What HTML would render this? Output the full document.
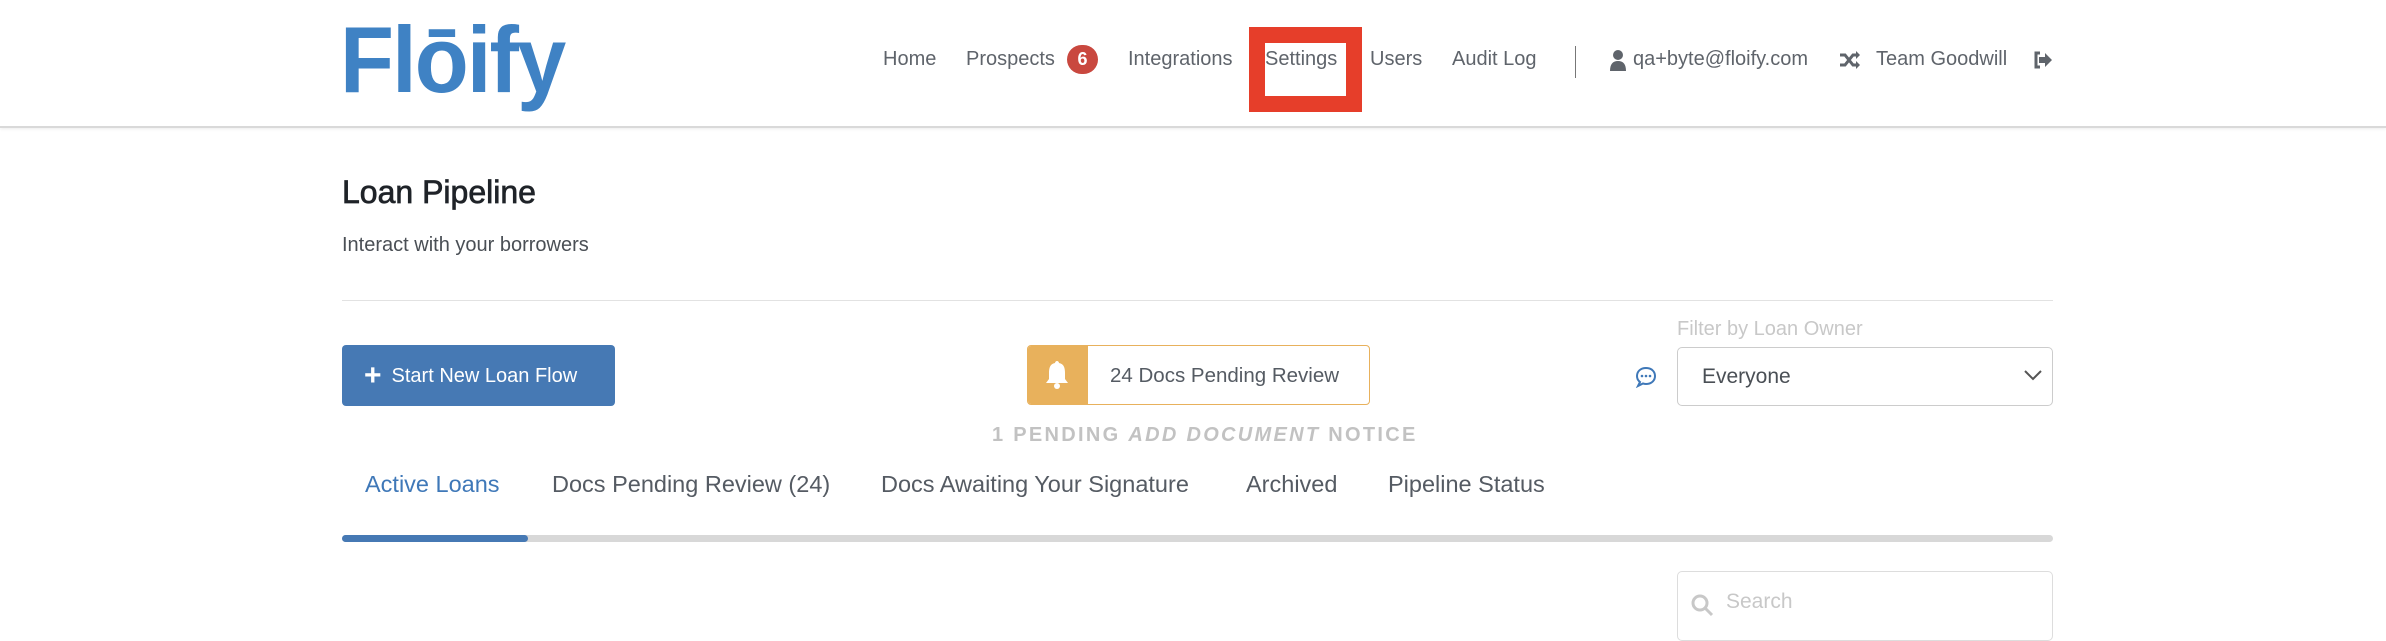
<!DOCTYPE html>
<html><head><meta charset="utf-8"><style>
*{margin:0;padding:0;box-sizing:border-box}
body{width:2386px;height:612px;overflow:hidden;background:#fff;font-family:"Liberation Sans",Arial,sans-serif;color:#555b63;position:relative}
.a{position:absolute;white-space:nowrap}
.hdr{position:absolute;left:0;top:0;width:2386px;height:128px;border-bottom:2px solid #d9d9d9;box-shadow:0 1px 3px rgba(0,0,0,.08)}
.nav{font-size:20px;color:#5f646b;top:48px}
</style></head><body>
<div class="hdr"></div>
<div class="a" style="left:340px;top:0px;font-size:94px;font-weight:bold;color:#3f82c4;letter-spacing:-2px;line-height:120px;transform:scaleX(0.94);transform-origin:left top">Flōify</div>
<div class="a nav" style="left:883px">Home</div>
<div class="a nav" style="left:966px">Prospects</div>
<div class="a" style="left:1067px;top:45px;width:31px;height:29px;border-radius:15px;background:#c9483f;color:#fff;font-size:18px;font-weight:bold;text-align:center;line-height:29px">6</div>
<div class="a nav" style="left:1128px">Integrations</div>
<div class="a nav" style="left:1265px">Settings</div>
<div class="a" style="left:1249px;top:27px;width:113px;height:85px;border:16px solid #e63e2a"></div>
<div class="a nav" style="left:1370px">Users</div>
<div class="a nav" style="left:1452px">Audit Log</div>
<div class="a" style="left:1575px;top:46px;width:1px;height:32px;background:#777"></div>
<svg class="a" style="left:1610px;top:49px" width="16" height="24" viewBox="0 0 16 24"><circle cx="8" cy="6" r="5" fill="#5f646b"/><path d="M0 22 Q0 12 8 12 Q16 12 16 22Z" fill="#5f646b"/></svg>
<div class="a nav" style="left:1633px">qa+byte@floify.com</div>
<svg class="a" style="left:1839px;top:50px" width="22" height="20" viewBox="0 0 22 20"><path d="M1 5h5l8 10h5M1 15h5l8-10h5" stroke="#5f646b" stroke-width="3" fill="none"/><path d="M17 1l4 4-4 4zM17 11l4 4-4 4z" fill="#5f646b"/></svg>
<div class="a nav" style="left:1876px">Team Goodwill</div>
<svg class="a" style="left:2033px;top:51px" width="20" height="18" viewBox="0 0 20 18"><path d="M7 2H3v14h4" stroke="#5f646b" stroke-width="3" fill="none"/><path d="M6 6h6V2l7 7-7 7v-4H6z" fill="#5f646b"/></svg>

<div class="a" style="left:342px;top:174px;font-size:32px;color:#1f2328;-webkit-text-stroke:0.7px #1f2328">Loan Pipeline</div>
<div class="a" style="left:342px;top:234px;font-size:20px;color:#4a4f55">Interact with your borrowers</div>
<div class="a" style="left:342px;top:300px;width:1711px;height:1px;background:#e2e2e2"></div>

<div class="a" style="left:342px;top:345px;width:273px;height:61px;background:#4679b4;border-radius:4px;color:#fff;font-size:20px;line-height:61px;padding-left:22px"><span style="font-size:30px;font-weight:bold;vertical-align:-3px;margin-right:10px">+</span>Start New Loan Flow</div>

<div class="a" style="left:1027px;top:345px;width:343px;height:60px;border:1.5px solid #e8b15c;border-radius:4px;overflow:hidden">
<div style="position:absolute;left:0;top:0;width:60px;height:60px;background:#e8b15c"></div>
<svg style="position:absolute;left:16px;top:14px" width="26" height="30" viewBox="0 0 26 30"><path d="M13 1c-1 0-2 1-2 2C6 4 5 8 5 13v6L2 23h22l-3-4v-6c0-5-1-9-6-10 0-1-1-2-2-2z" fill="#fff"/><circle cx="13" cy="26" r="3" fill="#fff"/></svg>
<div style="position:absolute;left:82px;top:0;line-height:60px;font-size:20.5px;color:#555b63">24 Docs Pending Review</div></div>

<div class="a" style="left:992px;top:424px;font-size:20px;font-weight:bold;color:#c2c2c2;letter-spacing:2.3px">1 PENDING <i>ADD DOCUMENT</i> NOTICE</div>

<svg class="a" style="left:1635px;top:366px" width="22" height="22" viewBox="0 0 22 22"><path d="M11 2C5.5 2 2 5.5 2 10c0 2.5 1 4.5 3 6l-2 4 5-2.5c1 .3 2 .5 3 .5 5.5 0 9-3.5 9-8S16.5 2 11 2z" fill="none" stroke="#3f78b8" stroke-width="2"/><circle cx="7" cy="10" r="1.3" fill="#3f78b8"/><circle cx="11" cy="10" r="1.3" fill="#3f78b8"/><circle cx="15" cy="10" r="1.3" fill="#3f78b8"/></svg>

<div class="a" style="left:1677px;top:318px;font-size:20px;color:#c8c8c8">Filter by Loan Owner</div>
<div class="a" style="left:1677px;top:347px;width:376px;height:59px;border:1px solid #ccc;border-radius:5px">
<div style="position:absolute;left:24px;top:0;line-height:57px;font-size:21px;color:#4a4f55">Everyone</div>
<svg style="position:absolute;right:10px;top:22px" width="18" height="12" viewBox="0 0 18 12"><path d="M1 1l8 8 8-8" stroke="#555" stroke-width="2" fill="none"/></svg></div>

<div class="a" style="left:365px;top:471px;font-size:23.5px;color:#3f78b8">Active Loans</div>
<div class="a" style="left:552px;top:471px;font-size:23.5px">Docs Pending Review (24)</div>
<div class="a" style="left:881px;top:471px;font-size:23.5px">Docs Awaiting Your Signature</div>
<div class="a" style="left:1246px;top:471px;font-size:23.5px">Archived</div>
<div class="a" style="left:1388px;top:471px;font-size:23.5px">Pipeline Status</div>
<div class="a" style="left:342px;top:535px;width:1711px;height:7px;background:#d8d8d8;border-radius:4px"></div>
<div class="a" style="left:342px;top:535px;width:186px;height:7px;background:#4679b4;border-radius:4px"></div>

<div class="a" style="left:1677px;top:571px;width:376px;height:70px;border:1px solid #ddd;border-radius:5px">
<svg style="position:absolute;left:12px;top:21px" width="24" height="24" viewBox="0 0 24 24"><circle cx="10" cy="10" r="7" stroke="#c8c8c8" stroke-width="3" fill="none"/><path d="M15 15l7 7" stroke="#c8c8c8" stroke-width="3"/></svg>
<div style="position:absolute;left:48px;top:18px;font-size:21px;color:#c8c8c8">Search</div></div>
</body></html>
